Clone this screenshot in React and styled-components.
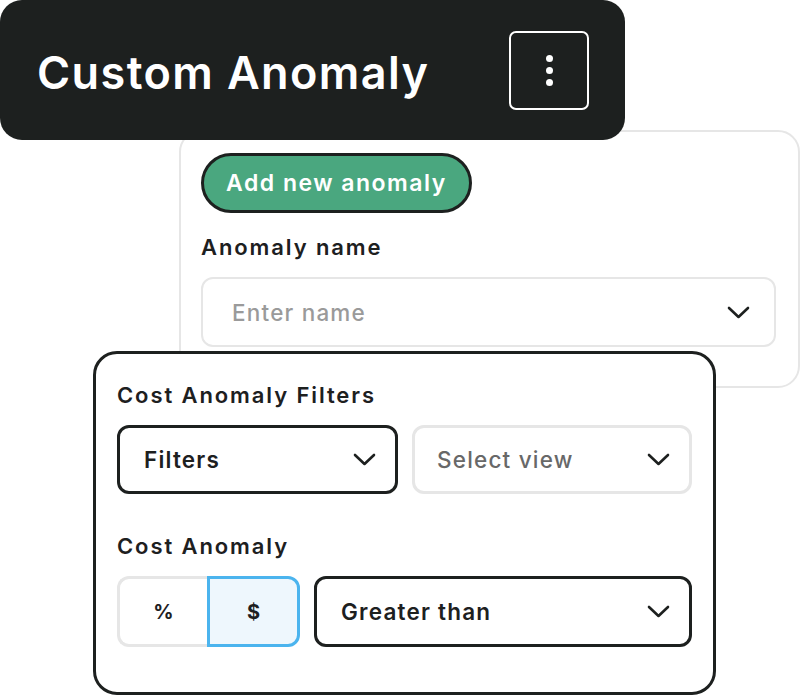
import React from 'react'
import styled, { createGlobalStyle } from 'styled-components'

const colors = {
  ink: '#1d201f',
  line: '#e6e6e6',
  green: '#4aa77f',
  blue: '#4bb4ee',
  blueTint: '#eef7fd',
  placeholder: '#9a9a9a',
  muted: '#686868'
}

const GlobalStyle = createGlobalStyle`
  body {
    margin: 0;
    background: #fff;
    font-family: Inter, "Liberation Sans", sans-serif;
    color: ${colors.ink};
  }
  * { box-sizing: border-box; }
`

const Chevron = () =>
  <svg width="23" height="13" viewBox="0 0 23 13" fill="none">
    <path d="M2 2 L11.5 11 L21 2" stroke={colors.ink} strokeWidth="2.6" strokeLinecap="round" strokeLinejoin="round" />
  </svg>

const Select = ({ label, $tone }) =>
  <SelectBox $tone={$tone}>
    <SelectText $tone={$tone}>{label}</SelectText>
    <Chevron />
  </SelectBox>

const App = () =>
  <>
    <GlobalStyle />
    <Stage>
      <Header>
        <Title>Custom Anomaly</Title>
        <MenuButton aria-label="More">
          <Dot /><Dot /><Dot />
        </MenuButton>
      </Header>

      <NameCard>
        <AddButton>Add new anomaly</AddButton>
        <Label>Anomaly name</Label>
        <Select label="Enter name" $tone="placeholder" />
      </NameCard>

      <FilterCard>
        <Label $top={0}>Cost Anomaly Filters</Label>
        <FilterRow>
          <Select label="Filters" $tone="active" />
          <Select label="Select view" $tone="muted" />
        </FilterRow>
        <Label $top={40}>Cost Anomaly</Label>
        <AmountRow>
          <Toggle>
            <Segment>%</Segment>
            <Segment $selected>$</Segment>
          </Toggle>
          <Select label="Greater than" $tone="active" />
        </AmountRow>
      </FilterCard>
    </Stage>
  </>

export default App

const Stage = styled.div`
  width: 801px;
  height: 695px;
  overflow: hidden;
  display: flex;
  flex-direction: column;
  align-items: flex-start;
`

const Header = styled.div`
  position: relative;
  z-index: 2;
  width: 625px;
  height: 140px;
  flex-shrink: 0;
  display: flex;
  align-items: center;
  justify-content: space-between;
  padding: 0 36px 0 37px;
  background: ${colors.ink};
  border-radius: 22px;
`

const Title = styled.h1`
  margin: 4px 0 0;
  color: #fff;
  font-size: 45px;
  font-weight: 600;
  letter-spacing: 1.4px;
`

const MenuButton = styled.div`
  width: 80px;
  height: 79px;
  display: flex;
  flex-direction: column;
  align-items: center;
  justify-content: center;
  gap: 5px;
  border: 2px solid #fff;
  border-radius: 7px;
`

const Dot = styled.span`
  width: 7px;
  height: 7px;
  border-radius: 50%;
  background: #fff;
`

const NameCard = styled.div`
  position: relative;
  z-index: 1;
  width: 621px;
  height: 258px;
  flex-shrink: 0;
  margin: -10px 0 0 179px;
  padding: 21px 22px 0 20px;
  border: 2px solid ${colors.line};
  border-radius: 22px;
  background: #fff;
  display: flex;
  flex-direction: column;
  align-items: flex-start;
`

const AddButton = styled.button`
  height: 60px;
  padding: 0 22px;
  border: 3px solid ${colors.ink};
  border-radius: 30px;
  background: ${colors.green};
  color: #fff;
  font-family: inherit;
  font-size: 23px;
  font-weight: 600;
  letter-spacing: 1.5px;
`

const Label = styled.div`
  margin: ${p => p.$top ?? 22}px 0 18px;
  font-size: 22px;
  font-weight: 600;
  line-height: 24px;
  letter-spacing: 1.9px;
`

const FilterCard = styled.div`
  position: relative;
  z-index: 3;
  width: 623px;
  height: 344px;
  flex-shrink: 0;
  margin: -37px 0 0 93px;
  padding: 29px 21px 0;
  border: 3px solid ${colors.ink};
  border-radius: 24px;
  background: #fff;
`

const FilterRow = styled.div`
  display: grid;
  grid-template-columns: 281px 1fr;
  gap: 14px;
  height: 69px;
`

const AmountRow = styled.div`
  display: grid;
  grid-template-columns: 183px 1fr;
  gap: 14px;
  height: 71px;
`

const insets = { active: 24, muted: 22, placeholder: 29 }

const SelectBox = styled.div`
  display: flex;
  align-items: center;
  justify-content: space-between;
  align-self: stretch;
  height: ${p => p.$tone === 'placeholder' ? '70px' : 'auto'};
  padding: 0 ${p => p.$tone === 'placeholder' ? 24 : 19}px 0 ${p => insets[p.$tone]}px;
  border: ${p => p.$tone === 'active'
    ? `3px solid ${colors.ink}`
    : `${p.$tone === 'placeholder' ? 2 : 3}px solid ${colors.line}`};
  border-radius: 12px;
  background: #fff;
`

const SelectText = styled.span`
  font-size: 22.5px;
  font-weight: ${p => p.$tone === 'active' ? 600 : 500};
  letter-spacing: 1.2px;
  color: ${p => p.$tone === 'placeholder' ? colors.placeholder : p.$tone === 'muted' ? colors.muted : colors.ink};
`

const Toggle = styled.div`
  display: flex;
`

const Segment = styled.div`
  flex: 1;
  display: flex;
  align-items: center;
  justify-content: center;
  font-size: 20px;
  font-weight: 700;
  border: ${p => p.$selected ? `3px solid ${colors.blue}` : `3px solid ${colors.line}`};
  border-right-width: ${p => p.$selected ? 3 : 0}px;
  border-radius: ${p => p.$selected ? '0 12px 12px 0' : '12px 0 0 12px'};
  background: ${p => p.$selected ? colors.blueTint : '#fff'};
`
